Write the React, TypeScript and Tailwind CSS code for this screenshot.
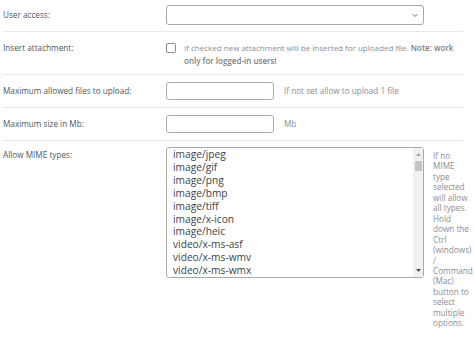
const mimeTypes = [
  'image/jpeg',
  'image/gif',
  'image/png',
  'image/bmp',
  'image/tiff',
  'image/x-icon',
  'image/heic',
  'video/x-ms-asf',
  'video/x-ms-wmv',
  'video/x-ms-wmx',
]

function Row({ children, className = '' }: { children: React.ReactNode; className?: string }) {
  return <div className={`flex items-start border-b border-[#e8e8e8] ${className}`}>{children}</div>
}

export default function App() {
  return (
    <div className="w-[474px] h-[357px] overflow-hidden bg-white pl-[3px] pr-[11px] font-['Open_Sans',sans-serif] text-[8.2px] text-[#50575e]">
      {/* User access */}
      <Row className="h-[32px] pt-[5px]">
        <div className="w-[163px] shrink-0 leading-[20px]">User access:</div>
        <div className="relative h-[20px] w-[258px] rounded-[3px] border border-[#a7aaad] bg-white">
          <svg className="absolute right-[4px] top-[7px]" width="8" height="5" viewBox="0 0 8 5">
            <path d="M1.5 1l2.5 2.5 2.5-2.5" fill="none" stroke="#777" strokeWidth="1" />
          </svg>
        </div>
      </Row>

      {/* Insert attachment */}
      <Row className="h-[43px] pt-[9px]">
        <div className="w-[163px] shrink-0 leading-[13px]">Insert attachment:</div>
        <div className="flex flex-1 items-start gap-[8px]">
          <div className="mt-[1.5px] h-[10px] w-[10px] shrink-0 rounded-[2px] border border-[#8c8f94] bg-white" />
          <div className="text-[8px] leading-[13px] text-[#8a8e93]">
            <div>
              If checked new attachment will be inserted for uploaded file. <b className="font-semibold text-[#7a7e83]">Note: work</b>
            </div>
            <div className="font-semibold text-[#7a7e83]">only for logged-in users!</div>
          </div>
        </div>
      </Row>

      {/* Max files */}
      <Row className="h-[33px] pt-[7px]">
        <div className="w-[163px] shrink-0 leading-[18px]">Maximum allowed files to upload:</div>
        <div className="h-[18px] w-[108px] rounded-[3px] border border-[#a7aaad] bg-white" />
        <div className="ml-[10px] leading-[18px] text-[#8a8e93]">If not set allow to upload 1 file</div>
      </Row>

      {/* Max size */}
      <Row className="h-[33px] pt-[7px]">
        <div className="w-[163px] shrink-0 leading-[18px]">Maximum size in Mb:</div>
        <div className="h-[18px] w-[108px] rounded-[3px] border border-[#a7aaad] bg-white" />
        <div className="ml-[10px] leading-[18px] text-[#8a8e93]">Mb</div>
      </Row>

      {/* MIME types */}
      <div className="flex items-start pt-[6px]">
        <div className="mt-[1px] w-[163px] shrink-0 leading-[13px]">Allow MIME types:</div>
        <div className="flex h-[131px] w-[258px] shrink-0 rounded-[3px] border border-[#a7aaad] bg-white">
          <div className="flex-1 pl-[6px] text-[10.2px] leading-[12.9px] text-[#3c434a]">
            {mimeTypes.map(m => (
              <div key={m}>{m}</div>
            ))}
          </div>
          <div className="flex w-[10px] flex-col items-center bg-[#f1f1f1]">
            <svg className="mt-[5px]" width="5" height="3" viewBox="0 0 5 3">
              <path d="M2.5 0L5 3H0z" fill="#a3a3a3" />
            </svg>
            <div className="mt-[5px] h-[10px] w-[7px] bg-[#c4c4c4]" />
            <div className="flex-1" />
            <svg className="mb-[5px]" width="5" height="3" viewBox="0 0 5 3">
              <path d="M0 0h5L2.5 3z" fill="#505050" />
            </svg>
          </div>
        </div>
        <p className="ml-[9px] mt-[4px] w-[39px] shrink-0 leading-[10.45px] text-[#8a8e93]">
          If no MIME type selected will allow all types. Hold down the Ctrl (windows) / Command (Mac) button to select multiple options.
        </p>
      </div>
    </div>
  )
}
